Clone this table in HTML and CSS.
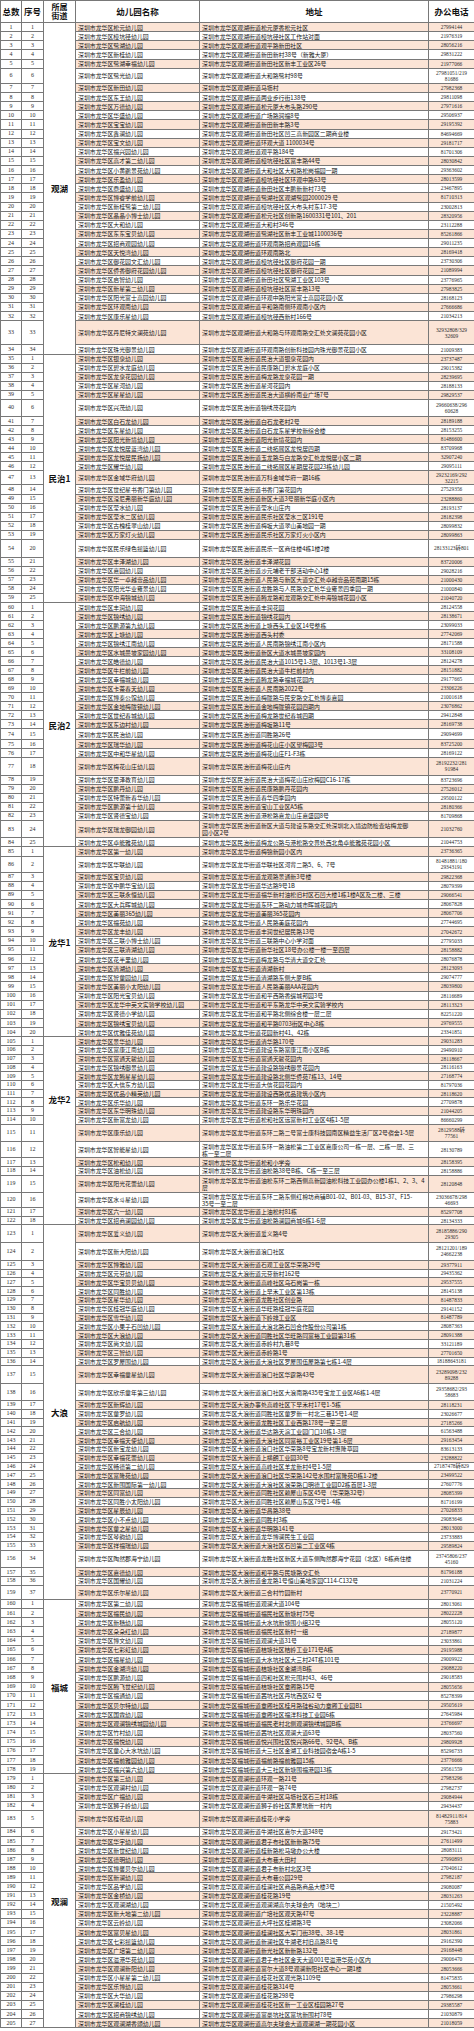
FILE: index.html
```html
<!DOCTYPE html>
<html lang="zh-CN">
<head>
<meta charset="utf-8">
<title>龙华区幼儿园名录</title>
<link rel="stylesheet" href="styles.css">
</head>
<body>
<table class="list">
<colgroup><col class="c1"><col class="c2"><col class="c3"><col class="c4"><col class="c5"><col class="c6"></colgroup>
<thead>
<tr><th>总数</th><th>序号</th><th class="h2">所属<br>街道</th><th>幼儿园名称</th><th>地址</th><th>办公电话</th></tr>
</thead>
<tbody class="g1">
<tr><td>1</td><td>1</td><td class="st" rowspan="34">观湖</td><td>深圳市龙华区松元幼儿园</td><td>深圳市龙华区观湖街道松元厦香松元社区</td><td>27994144</td></tr>
<tr><td>2</td><td>2</td><td>深圳市龙华区樟坑径幼儿园</td><td>深圳市龙华区观湖街道樟坑径社区工作站对面</td><td>21976319</td></tr>
<tr><td>3</td><td>3</td><td>深圳市龙华区鹭湖幼儿园</td><td>深圳市龙华区观湖街道观平路新田社区</td><td>28056216</td></tr>
<tr><td>4</td><td>4</td><td>深圳市龙华区新桂幼儿园</td><td>深圳市龙华区观湖街道新田新村38号（新雅大厦）</td><td>29831222</td></tr>
<tr><td>5</td><td>5</td><td>深圳市龙华区鹭湖幸福幼儿园</td><td>深圳市龙华区观湖街道新田社区新丰工业区26号</td><td>21977066</td></tr>
<tr class="r15"><td>6</td><td>6</td><td>深圳市龙华区鹭光幼儿园</td><td>深圳市龙华区观湖街道大和路鹭村98号</td><td>27981051/219<br>81686</td></tr>
<tr><td>7</td><td>7</td><td>深圳市龙华区新田幼儿园</td><td>深圳市龙华区观湖街道马坜村</td><td>27982368</td></tr>
<tr><td>8</td><td>8</td><td>深圳市龙华区东王幼儿园</td><td>深圳市龙华区观湖街道两业步行街138号</td><td>29811098</td></tr>
<tr><td>9</td><td>9</td><td>深圳市龙华区万德幼儿园</td><td>深圳市龙华区观湖街道松元厦大布头路290号</td><td>27971616</td></tr>
<tr><td>10</td><td>10</td><td>深圳市龙华区华盛幼儿园</td><td>深圳市龙华区观湖街道广场路润福8号</td><td>29506937</td></tr>
<tr><td>11</td><td>11</td><td>深圳市龙华区宝宝幼儿园</td><td>深圳市龙华区观湖街道新田新丰路3号</td><td>29195392</td></tr>
<tr><td>12</td><td>12</td><td>深圳市龙华区鑫澜幼儿园</td><td>深圳市龙华区观湖街道新田社区凹三高新园区二期商业楼</td><td>84694669</td></tr>
<tr><td>13</td><td>13</td><td>深圳市龙华区宝文幼儿园</td><td>深圳市龙华区观湖街道环观大道 1100034号</td><td>29181717</td></tr>
<tr><td>14</td><td>14</td><td>深圳市龙华区福兴园幼儿园</td><td>深圳市龙华区观湖街道观平路184号</td><td>81701306</td></tr>
<tr><td>15</td><td>15</td><td>深圳市龙华区高才第二幼儿园</td><td>深圳市龙华区观湖街道樟坑径社区富丰路44号</td><td>28030842</td></tr>
<tr><td>16</td><td>16</td><td>深圳市龙华区小黄鹂景苑幼儿园</td><td>深圳市龙华区观湖街道大和社区大和路松岗福园一期</td><td>29363602</td></tr>
<tr><td>17</td><td>17</td><td>深圳市龙华区乐盈幼儿园</td><td>深圳市龙华区观湖街道樟坑径社区环观中路63号</td><td>28013599</td></tr>
<tr><td>18</td><td>18</td><td>深圳市龙华区鼎盛幼儿园</td><td>深圳市龙华区观湖街道新田社区丰鹏新新村73号</td><td>23467895</td></tr>
<tr><td>19</td><td>19</td><td>深圳市龙华区博睿学前幼儿园</td><td>深圳市龙华区观湖街道鹭湖社区观湖鹭园2000029 号</td><td>81710313</td></tr>
<tr><td>20</td><td>20</td><td>深圳市龙华区新桂鹭第二幼儿园</td><td>深圳市龙华区观湖街道樟坑径社区大布头村东17-3号</td><td>23002813</td></tr>
<tr><td>21</td><td>21</td><td>深圳市龙华区晶晶小博士幼儿园</td><td>深圳市龙华区观湖街道松元社区创新路1600331号101、201</td><td>28320956</td></tr>
<tr><td>22</td><td>22</td><td>深圳市龙华区大和幼儿园</td><td>深圳市龙华区观湖街道大和村346号</td><td>23112288</td></tr>
<tr><td>23</td><td>23</td><td>深圳市龙华区东东宝贝幼儿园</td><td>深圳市龙华区观湖街道鹭湖社区新丰工业城1100036号</td><td>85261866</td></tr>
<tr><td>24</td><td>24</td><td>深圳市龙华区招商观园幼儿园</td><td>深圳市龙华区观湖街道环观南路招商观园16栋</td><td>29011235</td></tr>
<tr><td>25</td><td>25</td><td>深圳市龙华区天悦湾幼儿园</td><td>深圳市龙华区观湖街道环观南路北</td><td>28169418</td></tr>
<tr><td>26</td><td>26</td><td>深圳市龙华区御花园文汇幼儿园</td><td>深圳市龙华区观湖街道樟坑径社区御府花园一期</td><td>23730306</td></tr>
<tr><td>27</td><td>27</td><td>深圳市龙华区侨香御府花园幼儿园</td><td>深圳市龙华区观湖街道樟坑径社区御府花园二期</td><td>21089994</td></tr>
<tr><td>28</td><td>28</td><td>深圳市龙华区启智幼儿园</td><td>深圳市龙华区观湖街道新田社区鹭湖工业区103号</td><td>23776965</td></tr>
<tr><td>29</td><td>29</td><td>深圳市龙华区新星第二幼儿园</td><td>深圳市龙华区观湖街道樟坑径社区富丰路13号</td><td>27983825</td></tr>
<tr><td>30</td><td>30</td><td>深圳市龙华区阳光富士高园幼儿园</td><td>深圳市龙华区观湖街道环观中路阳光富士高园花园小区</td><td>28168123</td></tr>
<tr><td>31</td><td>31</td><td>深圳市龙华区环观南幼儿园</td><td>深圳市龙华区观湖街道平和路南侧环观南小区内</td><td>27666686</td></tr>
<tr><td>32</td><td>32</td><td>深圳市龙华区康乐星幼儿园</td><td>深圳市龙华区观湖街道樟坑径西新村166号</td><td>21034213</td></tr>
<tr class="r24"><td>33</td><td>33</td><td>深圳市龙华区丹尼特文澜苑幼儿园</td><td>深圳市龙华区观湖街道大和路与环观南路交汇处文澜苑花园小区</td><td>32932808/329<br>32609</td></tr>
<tr><td>34</td><td>34</td><td>深圳市龙华区珠光御景幼儿园</td><td>深圳市龙华区观湖街道环观南路创新科技园内珠光御景花园小区</td><td>21009383</td></tr>
</tbody>
<tbody class="g2">
<tr><td>35</td><td>1</td><td class="st" rowspan="25">民治1</td><td>深圳市龙华区银泉幼儿园</td><td>深圳市龙华区民治街道民治大道银泉花园内</td><td>23737487</td></tr>
<tr><td>36</td><td>2</td><td>深圳市龙华区碧水龙庭幼儿园</td><td>深圳市龙华区民治街道民康路口碧水龙庭小区</td><td>29015382</td></tr>
<tr><td>37</td><td>3</td><td>深圳市龙华区龙泉花园幼儿园</td><td>深圳市龙华区民治街道梅龙路龙泉花园一期</td><td>28239695</td></tr>
<tr><td>38</td><td>4</td><td>深圳市龙华区星河幼儿园</td><td>深圳市龙华区民治街道星河花园内</td><td>28188133</td></tr>
<tr><td>39</td><td>5</td><td>深圳市龙华区星星幼儿园</td><td>深圳市龙华区民治街道民治大道横岭南业广场7号</td><td>29829537</td></tr>
<tr class="r17"><td>40</td><td>6</td><td>深圳市龙华区兴茂幼儿园</td><td>深圳市龙华区民治街道锦绣茂花园内</td><td>29660638/296<br>60628</td></tr>
<tr><td>41</td><td>7</td><td>深圳市龙华区白石龙幼儿园</td><td>深圳市龙华区民治街道白石龙老村2号</td><td>28189188</td></tr>
<tr><td>42</td><td>8</td><td>深圳市龙华区东星幼儿园</td><td>深圳市龙华区民治街道白石龙东星学校新综合楼</td><td>28153255</td></tr>
<tr><td>43</td><td>9</td><td>深圳市龙华区阳光新境幼儿园</td><td>深圳市龙华区民治街道阳光新境花园内</td><td>81486600</td></tr>
<tr><td>44</td><td>10</td><td>深圳市龙华区龙悦居蓝湾幼儿园</td><td>深圳市龙华区民治街道二线拓展区龙悦居四期</td><td>83709968</td></tr>
<tr><td>45</td><td>11</td><td>深圳市龙华区龙悦居民扬幼儿园</td><td>深圳市龙华区民治街道玉龙路与白龙路交汇处龙悦居小区二期</td><td>32907240</td></tr>
<tr><td>46</td><td>12</td><td>深圳市龙华区耀华幼儿园</td><td>深圳市龙华区民治街道二线拓展区星期居花园23栋幼儿园</td><td>29095111</td></tr>
<tr class="r14"><td>47</td><td>13</td><td>深圳市龙华区金域华府幼儿园</td><td>深圳市龙华区民治街道万科金域华府一期16栋</td><td>29232169/292<br>32215</td></tr>
<tr><td>48</td><td>14</td><td>深圳市龙华区世纪星书香门第幼儿园</td><td>深圳市龙华区民治街道书香门第花园内</td><td>27529356</td></tr>
<tr><td>49</td><td>15</td><td>深圳市龙华区滢尼弗丽新华庭幼儿园</td><td>深圳市龙华区民治街道新区大道3号丽新华庭小区内</td><td>23288860</td></tr>
<tr><td>50</td><td>16</td><td>深圳市龙华区莹水幼儿园</td><td>深圳市龙华区民治街道莹水山庄内</td><td>28193137</td></tr>
<tr><td>51</td><td>17</td><td>深圳市龙华区莹水二区幼儿园</td><td>深圳市龙华区民治街道民乐社区莹水二区191号</td><td>28182398</td></tr>
<tr><td>52</td><td>18</td><td>深圳市龙华区古槐桂翠山幼儿园</td><td>深圳市龙华区民治街道梅坂大道翠山美地园一期</td><td>28099832</td></tr>
<tr><td>53</td><td>19</td><td>深圳市龙华区万家灯火幼儿园</td><td>深圳市龙华区民治街道民乐社区万家灯火小区内</td><td>28099863</td></tr>
<tr class="r18"><td>54</td><td>20</td><td>深圳市龙华区民乐绿色摇篮幼儿园</td><td>深圳市龙华区民治街道民乐一区商住楼4栋1楼2楼</td><td>28133123转801</td></tr>
<tr><td>55</td><td>21</td><td>深圳市龙华区丰泽湖幼儿园</td><td>深圳市龙华区民治街道丰泽湖花园</td><td>83720006</td></tr>
<tr><td>56</td><td>22</td><td>深圳市龙华区嘉园幼儿园</td><td>深圳市龙华区民治街道沙元埔老干部活动中心1楼</td><td>29028216</td></tr>
<tr><td>57</td><td>23</td><td>深圳市龙华区华一卓越壹品幼儿园</td><td>深圳市龙华区民治街道人民路与新区大道交汇处卓越壹品苑南期15栋</td><td>21000430</td></tr>
<tr><td>58</td><td>24</td><td>深圳市龙华区阳光华业雍景幼儿园</td><td>深圳市龙华区民治街道龙胜路与人民路交汇处华业雍景四季园一期</td><td>21000840</td></tr>
<tr><td>59</td><td>25</td><td>深圳市龙华区中海锦城幼儿园</td><td>深圳市龙华区民治街道腾龙路和龙观路交汇处中海锦城花园小区</td><td>21040720</td></tr>
</tbody>
<tbody class="g3 flip">
<tr><td>60</td><td>1</td><td class="st" rowspan="25">民治2</td><td>深圳市龙华区丰润幼儿园</td><td>深圳市龙华区民治街道丰润花园</td><td>28124558</td></tr>
<tr><td>61</td><td>2</td><td>深圳市龙华区锦绣幼儿园</td><td>深圳市龙华区民治街道锦绣花园内</td><td>28138671</td></tr>
<tr><td>62</td><td>3</td><td>深圳市龙华区鹏源第九幼儿园</td><td>深圳市龙华区民治街道上塘西头工业区14号整栋</td><td>23099033</td></tr>
<tr><td>63</td><td>4</td><td>深圳市龙华区上塘幼儿园</td><td>深圳市龙华区民治街道西头村委</td><td>27742069</td></tr>
<tr><td>64</td><td>5</td><td>深圳市龙华区锦绣江南幼儿园</td><td>深圳市龙华区民治街道人民南路锦绣江南小区内</td><td>28171588</td></tr>
<tr><td>65</td><td>6</td><td>深圳市龙华区水城曼坡家园幼儿园</td><td>深圳市龙华区民治街道新区大道水城曼坡家园内</td><td>33108109</td></tr>
<tr><td>66</td><td>7</td><td>深圳市龙华区皓德幼儿园</td><td>深圳市龙华区民治街道民治大道1015号1-3层、1013号1-3层</td><td>28124278</td></tr>
<tr><td>67</td><td>8</td><td>深圳市龙华区牛栏前幼儿园</td><td>深圳市龙华区民治街道民治大道牛栏前村内</td><td>28151882</td></tr>
<tr><td>68</td><td>9</td><td>深圳市龙华区幸福城幼儿园</td><td>深圳市龙华区民治街道腾龙路幸福城花园内</td><td>29177665</td></tr>
<tr><td>69</td><td>10</td><td>深圳市龙华区卡蒂春天幼儿园</td><td>深圳市龙华区民治街道人民南路2022号</td><td>23306226</td></tr>
<tr><td>70</td><td>11</td><td>深圳市龙华区博泰公馆幼儿园</td><td>深圳市龙华区民治街道梅陇路与民安路交汇处博泰嘉园</td><td>21001618</td></tr>
<tr><td>71</td><td>12</td><td>深圳市龙华区金地梅陇镇幼儿园</td><td>深圳市龙华区民治街道金地梅陇镇花园四期内</td><td>23076862</td></tr>
<tr><td>72</td><td>13</td><td>深圳市龙华区世纪春城幼儿园</td><td>深圳市龙华区民治街道梅龙路世纪春城四期</td><td>29412848</td></tr>
<tr><td>73</td><td>14</td><td>深圳市龙华区东边村幼儿园</td><td>深圳市龙华区民治街道梅坂路11号</td><td>28169738</td></tr>
<tr class="r11"><td>74</td><td>15</td><td>深圳市龙华区民治幼儿园</td><td>深圳市龙华区民治街道同胜路26号</td><td>29094699</td></tr>
<tr><td>75</td><td>16</td><td>深圳市龙华区瑞华幼儿园</td><td>深圳市龙华区民治街道梅花山庄小区望梅园3号</td><td>83725200</td></tr>
<tr><td>76</td><td>17</td><td>深圳市龙华区中和华星幼儿园</td><td>深圳市龙华区民治街道梅花山庄F1-F3栋</td><td>28169122</td></tr>
<tr class="r18"><td>77</td><td>18</td><td>深圳市龙华区梅花山庄幼儿园</td><td>深圳市龙华区民治街道梅花山庄内</td><td>28192232/281<br>91984</td></tr>
<tr><td>78</td><td>19</td><td>深圳市龙华区思泽教育幼儿园</td><td>深圳市龙华区民治街道民治大道梅花山庄欣梅园C16-17栋</td><td>83723696</td></tr>
<tr><td>79</td><td>20</td><td>深圳市龙华区鹏丹幼儿园</td><td>深圳市龙华区民治街道民康路鹏丹花园内</td><td>27526012</td></tr>
<tr><td>80</td><td>21</td><td>深圳市龙华区特蕾新春华幼儿园</td><td>深圳市龙华区民治街道春华四季园内</td><td>29500122</td></tr>
<tr><td>81</td><td>22</td><td>深圳市龙华区鹏源第十幼儿园</td><td>深圳市龙华区民治街道宝山工业区A5栋</td><td>28180366</td></tr>
<tr><td>82</td><td>23</td><td>深圳市龙华区贤德宝幼儿园</td><td>深圳市龙华区民治街道港松路嘉龙山庄嘉盛园8号</td><td>81709868</td></tr>
<tr class="r18"><td>83</td><td>24</td><td>深圳市龙华区瑞龙御园幼儿园</td><td>深圳市龙华区民治街道新区大道与建设东路交汇处深圳北入境边防检查站梅龙御<br>园小区2号</td><td>21032760</td></tr>
<tr><td>84</td><td>25</td><td>深圳市龙华区卓能雅苑幼儿园</td><td>深圳市龙华区民治街道梅龙公路与港松路交界处西北角卓能雅苑花园小区</td><td>21044753</td></tr>
</tbody>
<tbody class="g4">
<tr><td>85</td><td>1</td><td class="st" rowspan="20">龙华1</td><td>深圳市龙华区第一幼儿园</td><td>深圳市龙华区龙华街道梅锦新园小区内</td><td>23736365</td></tr>
<tr class="r16"><td>86</td><td>2</td><td>深圳市龙华区华联幼儿园</td><td>深圳市龙华区龙华街道华联社区河背二路5、6、7号</td><td>81481881/180<br>29343191</td></tr>
<tr><td>87</td><td>3</td><td>深圳市龙华区宝贝幼儿园</td><td>深圳市龙华区龙华街道龙观路景通新3号楼</td><td>29822368</td></tr>
<tr><td>88</td><td>4</td><td>深圳市龙华区中鹏华宝幼儿园</td><td>深圳市龙华区龙华街道华达路9号1B</td><td>28079399</td></tr>
<tr><td>89</td><td>5</td><td>深圳市龙华区三联永恒幼儿园</td><td>深圳市龙华区龙华街道福华新村油松旧村区石凹大楼1栋1楼A区及二楼、三楼</td><td>29066541</td></tr>
<tr><td>90</td><td>6</td><td>深圳市龙华区大兵晖城幼儿园</td><td>深圳市龙华区龙华街道东环二路动力城市晖城花园内</td><td>28067828</td></tr>
<tr><td>91</td><td>7</td><td>深圳市龙华区美丽365幼儿园</td><td>深圳市龙华区龙华街道美丽365花园内</td><td>28067706</td></tr>
<tr><td>92</td><td>8</td><td>深圳市龙华区福苑幼儿园</td><td>深圳市龙华区龙华街道人民路美庭花园内</td><td>27744695</td></tr>
<tr><td>93</td><td>9</td><td>深圳市龙华区龙丰幼儿园</td><td>深圳市龙华区龙华街道丰润世纪居民路13号</td><td>27042672</td></tr>
<tr><td>94</td><td>10</td><td>深圳市龙华区三联小博士幼儿园</td><td>深圳市龙华区龙华街道三联路中心小学对面</td><td>27795033</td></tr>
<tr><td>95</td><td>11</td><td>深圳市龙华区三联清湖幼儿园</td><td>深圳市龙华区龙华街道新华社区18号办公楼一楼一至四层</td><td>28158882</td></tr>
<tr><td>96</td><td>12</td><td>深圳市龙华区花半里幼儿园</td><td>深圳市龙华区龙华街道梅龙路与华清大道交汇处</td><td>28076878</td></tr>
<tr><td>97</td><td>13</td><td>深圳市龙华区清湖幼儿园</td><td>深圳市龙华区龙华街道清湖新村</td><td>28123093</td></tr>
<tr><td>98</td><td>14</td><td>深圳市龙华区智童园幼儿园</td><td>深圳市龙华区龙华街道清湖路东侧大厦B栋</td><td>29074777</td></tr>
<tr><td>99</td><td>15</td><td>深圳市龙华区美丽小太阳幼儿园</td><td>深圳市龙华区龙华街道人民路美丽AAA花园内</td><td>28039800</td></tr>
<tr><td>100</td><td>16</td><td>深圳市龙华区阳光宝贝幼儿园</td><td>深圳市龙华区龙华街道和平西路香缇城邦园3号</td><td>28116689</td></tr>
<tr><td>101</td><td>17</td><td>深圳市龙华区龙华中英文实验学校幼儿园</td><td>深圳市龙华区龙华街道和平东路龙华中英文实验学校内</td><td>28113323</td></tr>
<tr><td>102</td><td>18</td><td>深圳市龙华区贤德小学幼儿园</td><td>深圳市龙华区龙华街道和平路北侧综合楼一层二层</td><td>82251220</td></tr>
<tr><td>103</td><td>19</td><td>深圳市龙华区锦绣宝贝幼儿园</td><td>深圳市龙华区龙华街道和平路0703街区中心8栋</td><td>29769555</td></tr>
<tr><td>104</td><td>20</td><td>深圳市龙华区优雅佳苑幼儿园</td><td>深圳市龙华区龙华街道花园新村41、42栋</td><td>23341851</td></tr>
</tbody>
<tbody class="g5">
<tr><td>105</td><td>1</td><td class="st st-up" rowspan="18">龙华2</td><td>深圳市龙华区景华幼儿园</td><td>深圳市龙华区龙华街道清华路170号</td><td>29031283</td></tr>
<tr><td>106</td><td>2</td><td>深圳市龙华区富康江南幼儿园</td><td>深圳市龙华区龙华街道建设东路富康江南小区B栋</td><td>29490910</td></tr>
<tr><td>107</td><td>3</td><td>深圳市龙华区富通天骏幼儿园</td><td>深圳市龙华区龙华街道富通天骏花园内</td><td>28118667</td></tr>
<tr><td>108</td><td>4</td><td>深圳市龙华区锦绣御景幼儿园</td><td>深圳市龙华区龙华街道建设路锦绣御景花园内</td><td>28116163</td></tr>
<tr><td>109</td><td>5</td><td>深圳市龙华区龙腾星星幼儿园</td><td>深圳市龙华区龙华街道建设路北侧华侨苑7栋13、14号</td><td>27168774</td></tr>
<tr><td>110</td><td>6</td><td>深圳市龙华区大信东方幼儿园</td><td>深圳市龙华区龙华街道大信花园花园内</td><td>81797036</td></tr>
<tr><td>111</td><td>7</td><td>深圳市龙华区优品小精英幼儿园</td><td>深圳市龙华区龙华街道建设西路优品建筑小区内</td><td>28118620</td></tr>
<tr><td>112</td><td>8</td><td>深圳市龙华区乐华幼儿园</td><td>深圳市龙华区龙华街道东环一路乐华花园</td><td>27709878</td></tr>
<tr><td>113</td><td>9</td><td>深圳市龙华区东华明珠幼儿园</td><td>深圳市龙华区龙华街道建设路东华明珠园内</td><td>21044205</td></tr>
<tr><td>114</td><td>10</td><td>深圳市龙华区新富龙幼儿园</td><td>深圳市龙华区龙华街道松和社区远富新村工业区4栋1-5层</td><td>86660299</td></tr>
<tr class="r18"><td>115</td><td>11</td><td>深圳市龙华区康乐幼儿园</td><td>深圳市龙华区龙华街道东环二路二号富士康科技园南区精益生活厂区2号宿舍1-5层</td><td>28129588转<br>77561</td></tr>
<tr class="r16"><td>116</td><td>12</td><td>深圳市龙华区智能星幼儿园</td><td>深圳市龙华区龙华街道东环一路油松第二工业区嘉康公司一栋一层、二栋一层、三<br>栋一至二层</td><td>28130789</td></tr>
<tr><td>117</td><td>13</td><td>深圳市龙华区松和幼儿园</td><td>深圳市龙华区龙华街道松和小学旁</td><td>28158395</td></tr>
<tr><td>118</td><td>14</td><td>深圳市龙华区油松幼儿园</td><td>深圳市龙华区龙华街道油松路38号B栋、C栋一至三层</td><td>28158886</td></tr>
<tr class="r17"><td>119</td><td>15</td><td>深圳市龙华区阳光花蕾幼儿园</td><td>深圳市龙华区龙华街道油松东环二路西侧高新园油松科技工业园办公楼1栋1、2、3、4<br>层</td><td>28120848</td></tr>
<tr class="r15"><td>120</td><td>16</td><td>深圳市龙华区水斗星幼儿园</td><td>深圳市龙华区龙华街道东环二路东侧红棉坊商铺B01-02、B01-03、B15-37、F15-<br>35号一至二层</td><td>23036678/298<br>46693</td></tr>
<tr><td>121</td><td>17</td><td>深圳市龙华区六一幼儿园</td><td>深圳市龙华区龙华街道上油松村81栋</td><td>85297708</td></tr>
<tr><td>122</td><td>18</td><td>深圳市龙华区招商澜园幼儿园</td><td>深圳市龙华区龙华街道油松路澜园商城6栋1-6层</td><td>28134333</td></tr>
</tbody>
<tbody class="g6">
<tr class="r18"><td>123</td><td>1</td><td class="st" rowspan="37">大浪</td><td>深圳市龙华区爱义幼儿园</td><td>深圳市龙华区大浪街道爱义路4号</td><td>28185886/290<br>29305</td></tr>
<tr class="r18"><td>124</td><td>2</td><td>深圳市龙华区新大阳幼儿园</td><td>深圳市龙华区大浪街道浪口社区</td><td>28121201/189<br>24662238</td></tr>
<tr><td>125</td><td>3</td><td>深圳市龙华区博雅幼儿园</td><td>深圳市龙华区大浪街道石观工业区华荣路29号</td><td>29377911</td></tr>
<tr><td>126</td><td>4</td><td>深圳市龙华区元芬幼儿园</td><td>深圳市龙华区大浪街道元芬新村162号</td><td>29435362</td></tr>
<tr><td>127</td><td>5</td><td>深圳市龙华区华宝贝贝幼儿园</td><td>深圳市龙华区大浪街道高峰社区乌石岗第一栋</td><td>29537555</td></tr>
<tr><td>128</td><td>6</td><td>深圳市龙华区同胜幼儿园</td><td>深圳市龙华区大浪街道上早禾工业区第13栋</td><td>28145138</td></tr>
<tr><td>129</td><td>7</td><td>深圳市龙华区星华幼儿园</td><td>深圳市龙华区大浪街道龙胜社区创业路</td><td>81487833</td></tr>
<tr><td>130</td><td>8</td><td>深圳市龙华区桂冠华庭幼儿园</td><td>深圳市龙华区大浪街道华旺路桂冠华庭花园</td><td>29141152</td></tr>
<tr><td>131</td><td>9</td><td>深圳市龙华区雪华幼儿园</td><td>深圳市龙华区大浪街道下岭排工业区</td><td>81487789</td></tr>
<tr><td>132</td><td>10</td><td>深圳市龙华区小果子石凹幼儿园</td><td>深圳市龙华区大浪街道大浪北路石凹合作股份公司第1栋</td><td>28087363</td></tr>
<tr><td>133</td><td>11</td><td>深圳市龙华区大浪幼儿园</td><td>深圳市龙华区大浪街道同胜社区华旺路同富裕工业园第31栋</td><td>28091388</td></tr>
<tr><td>134</td><td>12</td><td>深圳市龙华区尚文幼儿园</td><td>深圳市龙华区大浪街道赤岭村九巷8号</td><td>33121189</td></tr>
<tr><td>135</td><td>13</td><td>深圳市龙华区三智幼儿园</td><td>深圳市龙华区大浪街道赤岭路1号</td><td>27701650</td></tr>
<tr><td>136</td><td>14</td><td>深圳市龙华区罗屋围幼儿园</td><td>深圳市龙华区大浪街道大浪社区罗屋围伍屋路第七栋1-4层</td><td>18188643181</td></tr>
<tr class="r18"><td>137</td><td>15</td><td>深圳市龙华区幸福童星幼儿园</td><td>深圳市龙华区大浪街道浪口社区华霆路43号</td><td>23289098/232<br>89288</td></tr>
<tr class="r17"><td>138</td><td>16</td><td>深圳市龙华区欣乐童年第三幼儿园</td><td>深圳市龙华区大浪街道浪口社区大浪南路435号宝龙工业区A6栋1-4层</td><td>29358682/293<br>58683</td></tr>
<tr><td>139</td><td>17</td><td>深圳市龙华区新辉幼儿园</td><td>深圳市龙华区大浪办事处高峰社区下早禾村17号1-5栋</td><td>28118231</td></tr>
<tr><td>140</td><td>18</td><td>深圳市龙华区童罗幼儿园</td><td>深圳市龙华区大浪街道同胜社区童罗新一村北三巷15号1-4层</td><td>23026677</td></tr>
<tr><td>141</td><td>19</td><td>深圳市龙华区启航幼儿园</td><td>深圳市龙华区大浪街道龙胜社区工业西路178号一至三层</td><td>27185266</td></tr>
<tr><td>142</td><td>20</td><td>深圳市龙华区三合幼儿园</td><td>深圳市龙华区大浪街道华达路天演工业园门口10栋1-3层</td><td>61563488</td></tr>
<tr><td>143</td><td>21</td><td>深圳市龙华区幸福天使幼儿园</td><td>深圳市龙华区大浪街道大浪社区同富裕工业区19号第1-6层</td><td>29163454</td></tr>
<tr><td>144</td><td>22</td><td>深圳市龙华区新宝龙幼儿园</td><td>深圳市龙华区大浪街道浪口社区华荣路8号宝龙新村惠隆草园</td><td>83613133</td></tr>
<tr><td>145</td><td>23</td><td>深圳市龙华区幸福花蕾幼儿园</td><td>深圳市龙华区大浪街道上横朗工业园30号</td><td>23288822</td></tr>
<tr><td>146</td><td>24</td><td>深圳市龙华区畅德第二幼儿园</td><td>深圳市龙华区大浪街道高峰社区羊龙新村4号1-5层</td><td>27187478转829</td></tr>
<tr><td>147</td><td>25</td><td>深圳市龙华区富隆苑幼儿园</td><td>深圳市龙华区大浪街道浪口社区华荣路142号水围村富隆苑D栋1-2楼</td><td>23499522</td></tr>
<tr><td>148</td><td>26</td><td>深圳市龙华区新围国际第一幼儿园</td><td>深圳市龙华区大浪街道大浪社区浪荣路口明德工业园D2栋首层1-3层</td><td>27607776</td></tr>
<tr><td>149</td><td>27</td><td>深圳市龙华区同富幼儿园</td><td>深圳市龙华区大浪街道同胜社区赖屋山东区45号（华荣路32号）</td><td>28085399</td></tr>
<tr><td>150</td><td>28</td><td>深圳市龙华区同胜小太阳幼儿园</td><td>深圳市龙华区大浪街道同胜社区赖屋山东区79号1-4栋</td><td>81716199</td></tr>
<tr><td>151</td><td>29</td><td>深圳市龙华区星辰幼儿园</td><td>深圳市龙华区大浪街道华昌路38号</td><td>27026833</td></tr>
<tr><td>152</td><td>30</td><td>深圳市龙华区小不点幼儿园</td><td>深圳市龙华区大浪街道同胜村3栋</td><td>29083646</td></tr>
<tr><td>153</td><td>31</td><td>深圳市龙华区童之星幼儿园</td><td>深圳市龙华区大浪街道华明路141号</td><td>28013000</td></tr>
<tr><td>154</td><td>32</td><td>深圳市龙华区琴韵幼儿园</td><td>深圳市龙华区大浪街道龙华博澜民生工业园</td><td>23733883</td></tr>
<tr><td>155</td><td>33</td><td>深圳市龙华区祥福瑞幼儿园</td><td>深圳市龙华区大浪街道大浪社区石凹第二工业区4栋</td><td>29589824</td></tr>
<tr class="r18"><td>156</td><td>34</td><td>深圳市龙华区陶然郡海宁幼儿园</td><td>深圳市龙华区大浪街道龙胜社区新区大道东侧陶然郡海宁花园（北区）6栋商住楼</td><td>23745806/237<br>45160</td></tr>
<tr><td>157</td><td>35</td><td>深圳市龙华区嘉德幼儿园</td><td>深圳市龙华区大浪街道和平路与民塘路交汇处</td><td>81796188</td></tr>
<tr><td>158</td><td>36</td><td>深圳市龙华区国耀幼儿园</td><td>深圳市龙华区大浪街道金龙路1号恒山美地家园C114-C132号</td><td>21031224</td></tr>
<tr class="r14"><td>159</td><td>37</td><td>深圳市龙华区乐尔星幼儿园</td><td>深圳市龙华区大浪街道三合村竹园新村</td><td>23770921</td></tr>
</tbody>
<tbody class="g7 flip">
<tr><td>160</td><td>1</td><td class="st" rowspan="19">福城</td><td>深圳市龙华区第二幼儿园</td><td>深圳市龙华区福城街道观澜大道104号</td><td>28013061</td></tr>
<tr><td>161</td><td>2</td><td>深圳市龙华区福民幼儿园</td><td>深圳市龙华区福城街道福民社区新塘村75号</td><td>28022228</td></tr>
<tr><td>162</td><td>3</td><td>深圳市龙华区新穗幼儿园</td><td>深圳市龙华区福城街道大水坑新塘围小组32号</td><td>28055120</td></tr>
<tr><td>163</td><td>4</td><td>深圳市龙华区朵朵红幼儿园</td><td>深圳市龙华区福城街道福民社区新村一组</td><td>27189877</td></tr>
<tr><td>164</td><td>5</td><td>深圳市龙华区博文幼儿园</td><td>深圳市龙华区福城街道观澜大道31号</td><td>23033861</td></tr>
<tr><td>165</td><td>6</td><td>深圳市龙华区七彩虹幼儿园</td><td>深圳市龙华区福城街道桔塘社区桔岭工业171号A栋</td><td>29195988</td></tr>
<tr><td>166</td><td>7</td><td>深圳市龙华区福星幼儿园</td><td>深圳市龙华区福城街道大水坑社区大三村24T栋101号</td><td>29009922</td></tr>
<tr><td>167</td><td>8</td><td>深圳市龙华区金湖湾幼儿园</td><td>深圳市龙华区福城街道桔塘社区金湖湾B栋</td><td>29088220</td></tr>
<tr><td>168</td><td>9</td><td>深圳市龙华区鹏源幼儿园</td><td>深圳市龙华区福城街道四和社区松元围村43、46号</td><td>29018583</td></tr>
<tr><td>169</td><td>10</td><td>深圳市龙华区腾飞世纪幼儿园</td><td>深圳市龙华区福城街道桔塘社区章阁路15号</td><td>28055656</td></tr>
<tr><td>170</td><td>11</td><td>深圳市龙华区福通幼儿园</td><td>深圳市龙华区福城街道茜坑社区丹坑西区62 号</td><td>85278399</td></tr>
<tr><td>171</td><td>12</td><td>深圳市龙华区贝尔特幼儿园</td><td>深圳市龙华区福城街道章阁社区桂月路硅谷动力章阁工业园B1</td><td>29505619</td></tr>
<tr><td>172</td><td>13</td><td>深圳市龙华区国霖幼儿园</td><td>深圳市龙华区福城街道章阁社区福洋科技工业园6栋</td><td>27645984</td></tr>
<tr><td>173</td><td>14</td><td>深圳市龙华区观澜锦绣城园幼儿园</td><td>深圳市龙华区福城街道福民老村北侧观澜锦绣城园B栋</td><td>23766697</td></tr>
<tr><td>174</td><td>15</td><td>深圳市龙华区竹村幼儿园</td><td>深圳市龙华区福城街道茜坑社区观澜大道63号</td><td>28037560</td></tr>
<tr><td>175</td><td>16</td><td>深圳市龙华区福悦幼儿园</td><td>深圳市龙华区福城街道悦兴围社区悦兴路66号、92号A、B栋</td><td>29809928</td></tr>
<tr><td>176</td><td>17</td><td>深圳市龙华区童心大水坑幼儿园</td><td>深圳市龙华区福城街道大三社区金湖工业科技园宿舍A栋1-5</td><td>85296733</td></tr>
<tr><td>177</td><td>18</td><td>深圳市龙华区福前雅园幼儿园</td><td>深圳市龙华区福城街道福前路福前雅园15栋</td><td>23776666</td></tr>
<tr><td>178</td><td>19</td><td>深圳市龙华区福兴第六幼儿园</td><td>深圳市龙华区福城街道大三社区新塘围福港园13栋</td><td>29561559</td></tr>
</tbody>
<tbody class="g8">
<tr><td>179</td><td>1</td><td class="st" rowspan="27">观澜</td><td>深圳市龙华区第三幼儿园</td><td>深圳市龙华区观澜街道环观一路21号</td><td>27983296</td></tr>
<tr><td>180</td><td>2</td><td>深圳市龙华区观澜村幼儿园</td><td>深圳市龙华区观澜街道环观一路74号</td><td>27982737</td></tr>
<tr><td>181</td><td>3</td><td>深圳市龙华区广福幼儿园</td><td>深圳市龙华区观澜街道牛湖社区马坜社区石三村18栋</td><td>29084944</td></tr>
<tr><td>182</td><td>4</td><td>深圳市龙华区狮子岭幼儿园</td><td>深圳市龙华区观澜街道狮子岭社区黄屋坑新一村内</td><td>29434437</td></tr>
<tr class="r17"><td>183</td><td>5</td><td>深圳市龙华区桂花幼儿园</td><td>深圳市龙华区观澜街道桂花小学旁</td><td>81482911/814<br>75883</td></tr>
<tr><td>184</td><td>6</td><td>深圳市龙华区小星星幼儿园</td><td>深圳市龙华区观澜街道牛湖社区嘉尔大道348号</td><td>29173421</td></tr>
<tr><td>185</td><td>7</td><td>深圳市龙华区华宇幼儿园</td><td>深圳市龙华区观澜街道君子布社区新新路75号</td><td>27611499</td></tr>
<tr><td>186</td><td>8</td><td>深圳市龙华区新世纪幼儿园</td><td>深圳市龙华区观澜街道桂新路松马墩办公大楼</td><td>28083111</td></tr>
<tr><td>187</td><td>9</td><td>深圳市龙华区德明幼儿园</td><td>深圳市龙华区观澜街道大布巷大田村</td><td>27990893</td></tr>
<tr><td>188</td><td>10</td><td>深圳市龙华区博馨贝尔幼儿园</td><td>深圳市龙华区观澜街道君子布新村北区3号</td><td>27040612</td></tr>
<tr><td>189</td><td>11</td><td>深圳市龙华区新澜幼儿园</td><td>深圳市龙华区观澜街道大布巷公园29号</td><td>27982187</td></tr>
<tr><td>190</td><td>12</td><td>深圳市龙华区品学幼儿园</td><td>深圳市龙华区观澜街道桂澜社区商品路商品大楼3号</td><td>29080087</td></tr>
<tr><td>191</td><td>13</td><td>深圳市龙华区金桥幼儿园</td><td>深圳市龙华区观澜街道桂花路19号</td><td>28031263</td></tr>
<tr><td>192</td><td>14</td><td>深圳市龙华区观澜湖幼儿园</td><td>深圳市龙华区观澜街道观澜湖高尔夫球会内（地块二）</td><td>21505492</td></tr>
<tr><td>193</td><td>15</td><td>深圳市龙华区新大地第二幼儿园</td><td>深圳市龙华区观澜街道广培社区观天路47号</td><td>23228887</td></tr>
<tr><td>194</td><td>16</td><td>深圳市龙华区云岭幼儿园</td><td>深圳市龙华区观澜街道大坪社区桂湖路3号</td><td>23082066</td></tr>
<tr><td>195</td><td>17</td><td>深圳市龙华区富贝星幼儿园</td><td>深圳市龙华区观澜街道桂澜社区大军门街38号、38-1号</td><td>28031861</td></tr>
<tr><td>196</td><td>18</td><td>深圳市龙华区七彩摇篮幼儿园</td><td>深圳市龙华区观澜街道新澜社区牛湖老村旧高路81号</td><td>29162390</td></tr>
<tr><td>197</td><td>19</td><td>深圳市龙华区广培第二幼儿园</td><td>深圳市龙华区观澜街道新光社区新新路132号</td><td>29168448</td></tr>
<tr><td>198</td><td>20</td><td>深圳市龙华区溢港华苑幼儿园</td><td>深圳市龙华区观澜街道君子布社区金天大道001号溢港华苑小区内</td><td>29006470</td></tr>
<tr><td>199</td><td>21</td><td>深圳市龙华区观澜新阳幼儿园</td><td>深圳市龙华区观澜街道富尔大道8号观澜新阳社区中心一期1楼</td><td>28053666</td></tr>
<tr><td>200</td><td>22</td><td>深圳市龙华区小星星第二幼儿园</td><td>深圳市龙华区观澜街道桂花社区观光路1109号</td><td>81475835</td></tr>
<tr><td>201</td><td>23</td><td>深圳市龙华区乐博幼儿园</td><td>深圳市龙华区观澜街道桂花路314号</td><td>28053661</td></tr>
<tr><td>202</td><td>24</td><td>深圳市龙华区大华幼儿园</td><td>深圳市龙华区观澜街道桂花路298号</td><td>27986298</td></tr>
<tr><td>203</td><td>25</td><td>深圳市龙华区澜桂幼儿园</td><td>深圳市龙华区观澜街道桂花社区新一工业区桂园路27号</td><td>29385587</td></tr>
<tr><td>204</td><td>26</td><td>深圳市龙华区招商锦绣幼儿园</td><td>深圳市龙华区观澜街道富豪坑社区富坑新围村78号</td><td>21030879</td></tr>
<tr><td>205</td><td>27</td><td>深圳市龙华区观澜湖香颂幼儿园</td><td>深圳市龙华区观澜街道高尔夫球会大道观澜湖一期花园小区</td><td>21018059</td></tr>
</tbody>
</table>
</body>
</html>
```

FILE: styles.css
```css
html, body {
  margin: 0;
  padding: 0;
  background: #ffffff;
}

.list {
  border-collapse: collapse;
  table-layout: fixed;
  width: 474px;
  font-family: "Liberation Serif", "Noto Sans CJK SC", serif;
  color: #141414;
}

.c1 { width: 21px; }
.c2 { width: 22px; }
.c3 { width: 32px; }
.c4 { width: 124px; }
.c5 { width: 229px; }
.c6 { width: 46px; }

.list th,
.list td {
  border: 1px solid #787878;
  padding: 0;
  vertical-align: middle;
  white-space: nowrap;
  overflow: hidden;
}

.list th {
  height: 21px;
  font-family: "Noto Sans CJK SC", sans-serif;
  font-weight: 700;
  font-size: 8.5px;
  line-height: 9px;
  color: #111111;
  text-align: center;
}

.list th.h2 {
  font-size: 8px;
  line-height: 8.5px;
}

.list td {
  font-size: 6px;
  line-height: 7px;
}

.list td:nth-child(1),
.list td:nth-child(2) {
  text-align: center;
  color: #2e2e2e;
}

.list td:nth-last-child(3),
.list td:nth-last-child(2) {
  text-align: left;
  padding-left: 2px;
  font-family: "Noto Sans CJK SC", sans-serif;
  font-size: 5.9px;
}

.list td:nth-last-child(1) {
  text-align: center;
  font-size: 5.4px;
  line-height: 6px;
  color: #2e2e2e;
}

.list td.st {
  font-family: "Noto Sans CJK SC", sans-serif;
  font-weight: 700;
  font-size: 8.5px;
  line-height: 10px;
  text-align: center;
  color: #111111;
  background: #ffffff;
}

.list td.st-up {
  padding-bottom: 64px;
}

/* alternating shading of the last three columns */
.list tbody tr:nth-child(odd) td:nth-last-child(-n+3) {
  background: #fbe4d6;
}
.list tbody.flip tr:nth-child(odd) td:nth-last-child(-n+3) {
  background: transparent;
}
.list tbody.flip tr:nth-child(even) td:nth-last-child(-n+3) {
  background: #fbe4d6;
}

/* row heights per street group */
.g1 tr { height: 9.14px; }
.g2 tr { height: 9.09px; }
.g3 tr { height: 9px; }
.g4 tr { height: 9.16px; }
.g5 tr { height: 8.72px; }
.g6 tr { height: 8.81px; }
.g7 tr { height: 9.2px; }
.g8 tr { height: 9.12px; }

.list tr.r11 { height: 11px; }
.list tr.r14 { height: 14px; }
.list tr.r15 { height: 15.3px; }
.list tr.r16 { height: 16px; }
.list tr.r17 { height: 17px; }
.list tr.r18 { height: 17.7px; }
.list tr.r24 { height: 24.3px; }
```
